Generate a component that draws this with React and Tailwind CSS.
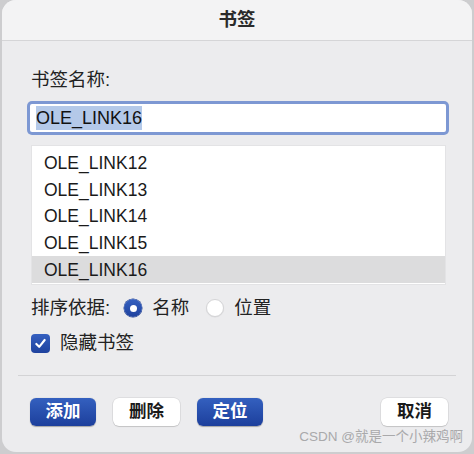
import React from 'react';

const font = { fontFamily: '"Liberation Sans", "Noto Sans CJK SC", sans-serif' };

const items = ['OLE_LINK12', 'OLE_LINK13', 'OLE_LINK14', 'OLE_LINK15', 'OLE_LINK16'];

const Radio = ({ checked, label }) => (
  <div className="flex items-center gap-[10px]">
    {checked ? (
      <span className="w-[18px] h-[18px] rounded-full bg-gradient-to-b from-[#3560c0] to-[#1f429e] flex items-center justify-center shadow-[0_0_0_0.5px_#1d3c8f]">
        <span className="w-[7px] h-[7px] rounded-full bg-white" />
      </span>
    ) : (
      <span className="w-[18px] h-[18px] rounded-full bg-white border border-[#d4d4d6] shadow-[0_0.5px_1px_rgba(0,0,0,0.08)]" />
    )}
    <span>{label}</span>
  </div>
);

const Button = ({ primary, children }) => (
  <button
    className={
      primary
        ? 'w-[66px] h-[28px] rounded-[6px] bg-gradient-to-b from-[#3460bf] to-[#1d3f9c] text-white font-semibold text-[17.5px] leading-none shadow-[0_0.5px_1px_rgba(0,0,0,0.3)]'
        : 'w-[67px] h-[28px] rounded-[6px] bg-white text-[#1a1a1a] font-semibold text-[17.5px] leading-none shadow-[0_0_0_0.5px_rgba(0,0,0,0.12),0_1px_1px_rgba(0,0,0,0.12)]'
    }
  >
    {children}
  </button>
);

export default function App() {
  return (
    <div style={font} className="w-[474px] h-[454px] bg-[#cdcdcf] overflow-hidden">
      <div className="ml-[2px] w-[470px] h-[452px] rounded-[14px] bg-[#ececee] overflow-hidden flex flex-col text-[#222]">
        {/* title bar */}
        <div className="h-[41px] shrink-0 bg-[#f3f3f4] border-b border-[#d5d5d7] flex items-center justify-center text-[18.5px] font-semibold text-[#2a2a2a]">
          书签
        </div>

        <div className="pl-[29px] pr-[25px] flex flex-col">
          <div className="mt-[27px] h-[24px] leading-[24px] text-[18.5px]">书签名称:</div>

          {/* name input */}
          <div className="mt-[9px] -ml-[4px] w-[422px] h-[34px] rounded-[5px] bg-[#7d98d3] p-[3px]">
            <div className="w-full h-full bg-white rounded-[2px] flex items-center pl-[6px]">
              <span className="bg-[#b4c9e9] text-[18px] leading-[24px] text-[#111]">OLE_LINK16</span>
            </div>
          </div>

          {/* list */}
          <div className="mt-[10px] w-[415px] h-[140px] bg-white border border-[#e3e3e5] pt-[4px]">
            {items.map((t, i) => (
              <div
                key={t}
                className={`h-[26.6px] flex items-center pl-[12px] text-[17.5px] text-[#1a1a1a] ${i === 4 ? 'bg-[#dcdcdd]' : ''}`}
              >
                {t}
              </div>
            ))}
          </div>

          {/* sort by */}
          <div className="mt-[11px] h-[24px] flex items-center text-[18.5px]">
            <span className="mr-[14px]">排序依据:</span>
            <Radio checked label="名称" />
            <span className="w-[17px]" />
            <Radio label="位置" />
          </div>

          {/* hide bookmarks */}
          <div className="mt-[11px] h-[24px] flex items-center gap-[10px] text-[18.5px]">
            <span className="w-[19px] h-[19px] rounded-[4px] bg-gradient-to-b from-[#3560c0] to-[#1f429e] flex items-center justify-center">
              <svg width="13" height="13" viewBox="0 0 14 14" fill="none">
                <path d="M2.5 7.5 L5.6 10.6 L11.5 3.2" stroke="white" strokeWidth="2.3" strokeLinecap="round" strokeLinejoin="round" />
              </svg>
            </span>
            <span>隐藏书签</span>
          </div>
        </div>

        {/* separator */}
        <div className="mt-[20px] mx-[16px] h-px bg-[#d3d3d5]" />

        {/* buttons */}
        <div className="mt-[22px] pl-[28px] pr-[24px] flex items-center">
          <Button primary>添加</Button>
          <span className="w-[17px]" />
          <Button>删除</Button>
          <span className="w-[17px]" />
          <Button primary>定位</Button>
          <span className="flex-1" />
          <Button>取消</Button>
        </div>

        <div className="mt-[2px] pr-[9px] text-right text-[13.5px] text-[#a9a9ab] leading-[18px]">
          CSDN @就是一个小辣鸡啊
        </div>
      </div>
    </div>
  );
}
